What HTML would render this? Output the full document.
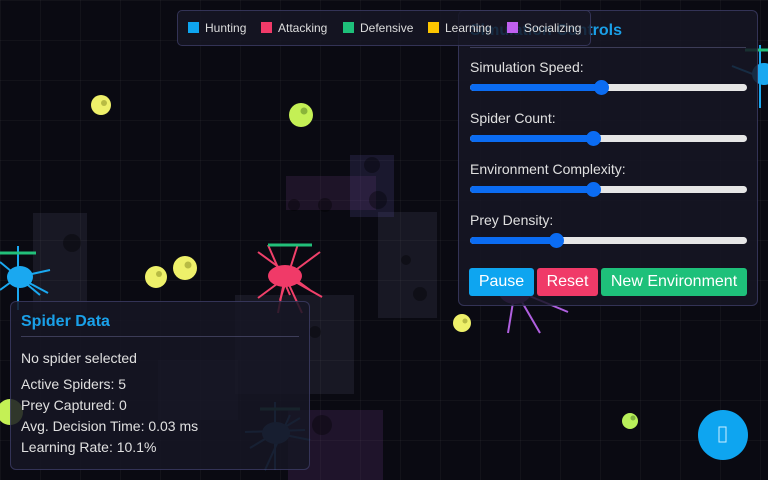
<!DOCTYPE html>
<html><head><meta charset="utf-8"><style>
*{margin:0;padding:0;box-sizing:border-box}
body{width:768px;height:480px;overflow:hidden;background:#0a0a12;font-family:"Liberation Sans",sans-serif;position:relative;
background-image:linear-gradient(rgba(255,255,255,.035) 1px,transparent 1px),linear-gradient(90deg,rgba(255,255,255,.035) 1px,transparent 1px);background-size:40px 40px}
svg.scene{position:absolute;left:0;top:0}
.panel{position:absolute;background:rgba(22,22,36,.85);border:1px solid rgba(90,90,150,.45);border-radius:6px}
.lbl{position:absolute;left:11px;color:#e0e0e0;font-size:14px}
.sl{position:absolute;left:11px;width:277px;height:7px;background:#e6e6e6;border-radius:4px}
.sl i{position:absolute;left:0;top:0;height:7px;background:#0b6cf2;border-radius:4px}
.sl b{position:absolute;top:-4px;width:15px;height:15px;border-radius:50%;background:#0b6cf2;margin-left:-7px}
.btn{position:absolute;top:257px;height:28px;color:#fff;font-size:16px;line-height:28px;text-align:center;border-radius:3px;white-space:nowrap}
.leg{position:absolute;z-index:10;left:177px;top:10px;width:414px;height:36px;background:rgba(22,22,36,.85);border:1px solid rgba(90,90,150,.45);border-radius:5px;font-size:12px;color:#ddd}
.leg span{position:absolute;top:11px;line-height:13px;white-space:nowrap}
.leg span:before{content:"";display:inline-block;width:11px;height:11px;margin-right:6px;vertical-align:-1px;background:var(--c)}
.dt{position:absolute;left:10px;color:#e0e0e0;font-size:14px}
</style></head><body>
<svg class="scene" width="768" height="480">
<g fill="rgba(120,120,160,.13)">
<rect x="33" y="213" width="54" height="100"/>
<rect x="235" y="295" width="119" height="99"/>
<rect x="378" y="212" width="59" height="106"/>
<rect x="158" y="360" width="80" height="60"/>
<rect x="350" y="155" width="44" height="62" fill="rgba(100,90,180,.18)"/>
</g>
<rect x="286" y="176" width="90" height="34" fill="rgba(110,60,130,.2)"/>
<rect x="288" y="410" width="95" height="70" fill="rgba(110,60,130,.22)"/>
<g fill="rgba(0,0,0,.35)"><circle cx="72" cy="243" r="9"/><circle cx="420" cy="294" r="7"/><circle cx="406" cy="260" r="5"/><circle cx="315" cy="332" r="6"/><circle cx="322" cy="425" r="10"/><circle cx="372" cy="165" r="8"/><circle cx="378" cy="200" r="9"/><circle cx="294" cy="205" r="6"/><circle cx="325" cy="205" r="7"/></g>
<circle cx="101" cy="105" r="10" fill="#eef06a"/><circle cx="104" cy="103" r="3" fill="#b8bb44"/>
<circle cx="301" cy="115" r="12" fill="#c4f055"/><circle cx="304" cy="111" r="3.5" fill="#8ab43a"/>
<circle cx="156" cy="277" r="11" fill="#eef06a"/><circle cx="159" cy="274" r="3" fill="#b8bb44"/>
<circle cx="185" cy="268" r="12" fill="#eef06a"/><circle cx="188" cy="265" r="3.5" fill="#b8bb44"/>
<circle cx="462" cy="323" r="9" fill="#eef06a"/><circle cx="465" cy="321" r="2.5" fill="#b8bb44"/>
<circle cx="630" cy="421" r="8" fill="#b8f05a"/><circle cx="633" cy="418" r="2.5" fill="#7fb040"/>
<circle cx="10" cy="412" r="13" fill="#c4f055"/>
<g stroke="#f0406a" stroke-width="2"><line x1="268" y1="245" x2="290" y2="295"/><line x1="298" y1="244" x2="280" y2="300"/><line x1="258" y1="252" x2="310" y2="290"/><line x1="320" y1="252" x2="258" y2="298"/><line x1="285" y1="276" x2="322" y2="297"/><line x1="285" y1="276" x2="302" y2="313"/><line x1="285" y1="276" x2="278" y2="313"/></g>
<line x1="268" y1="245" x2="312" y2="245" stroke="#22c07a" stroke-width="3"/>
<ellipse cx="285" cy="276" rx="17" ry="11" fill="#f03a68"/>
<g stroke="#1aa8f0" stroke-width="2"><line x1="18" y1="246" x2="18" y2="310"/><line x1="0" y1="262" x2="40" y2="295"/><line x1="18" y1="277" x2="50" y2="270"/><line x1="18" y1="277" x2="48" y2="293"/><line x1="18" y1="277" x2="0" y2="290"/></g>
<line x1="0" y1="253" x2="36" y2="253" stroke="#22c07a" stroke-width="3"/>
<ellipse cx="20" cy="277" rx="13" ry="11" fill="#1aa8f0"/>
<g stroke="#1aa8f0" stroke-width="2"><line x1="760" y1="45" x2="760" y2="108"/><line x1="732" y1="66" x2="768" y2="80"/></g>
<line x1="745" y1="50" x2="768" y2="50" stroke="#22c07a" stroke-width="3"/>
<ellipse cx="764" cy="74" rx="12" ry="11" fill="#1aa8f0"/>
<g stroke="#1c5a86" stroke-width="2"><line x1="275" y1="402" x2="275" y2="470"/><line x1="245" y1="432" x2="305" y2="430"/><line x1="250" y1="448" x2="300" y2="418"/><line x1="265" y1="470" x2="290" y2="415"/><line x1="275" y1="433" x2="310" y2="440"/></g>
<line x1="260" y1="409" x2="300" y2="409" stroke="#1e6a55" stroke-width="3"/>
<ellipse cx="276" cy="433" rx="14" ry="11" fill="#1b4e74"/>
<g stroke="#b060e0" stroke-width="2"><line x1="515" y1="290" x2="508" y2="333"/><line x1="515" y1="290" x2="540" y2="333"/><line x1="515" y1="290" x2="568" y2="312"/></g>
<ellipse cx="515" cy="292" rx="16" ry="12" fill="#7a3aa0"/>
<circle cx="723" cy="435" r="25" fill="#0ea5f0"/>
<rect x="719" y="427" width="7" height="15" fill="none" stroke="#cdeeff" stroke-width="1"/>
</svg>

<div class="panel" style="left:458px;top:10px;width:300px;height:296px">
<div style="position:absolute;left:11px;top:11px;font-size:16px;font-weight:bold;color:#1aa0e8">Simulation Controls</div>
<div style="position:absolute;left:11px;right:11px;top:36px;border-top:1px solid rgba(120,120,170,.4)"></div>
<div class="lbl" style="top:48px">Simulation Speed:</div>
<div class="sl" style="top:73px"><i style="width:131px"></i><b style="left:131px"></b></div>
<div class="lbl" style="top:99px">Spider Count:</div>
<div class="sl" style="top:124px"><i style="width:123px"></i><b style="left:123px"></b></div>
<div class="lbl" style="top:150px">Environment Complexity:</div>
<div class="sl" style="top:175px"><i style="width:123px"></i><b style="left:123px"></b></div>
<div class="lbl" style="top:201px">Prey Density:</div>
<div class="sl" style="top:226px"><i style="width:86px"></i><b style="left:86px"></b></div>
<div class="btn" style="left:10px;width:65px;background:#0ea5f0">Pause</div>
<div class="btn" style="left:78px;width:61px;background:#f03a68">Reset</div>
<div class="btn" style="left:142px;width:146px;background:#1ec07a">New Environment</div>
</div>

<div class="leg">
<span style="left:10px;--c:#0ea5f0">Hunting</span>
<span style="left:83px;--c:#f03a68">Attacking</span>
<span style="left:165px;--c:#1ec07a">Defensive</span>
<span style="left:250px;--c:#fcc500">Learning</span>
<span style="left:329px;--c:#c060f0">Socializing</span>
</div>

<div class="panel" style="left:10px;top:301px;width:300px;height:169px">
<div style="position:absolute;left:10px;top:11px;font-size:16px;font-weight:bold;color:#1aa0e8">Spider Data</div>
<div style="position:absolute;left:10px;right:10px;top:34px;border-top:1px solid rgba(120,120,170,.4)"></div>
<div class="dt" style="top:48px">No spider selected</div>
<div class="dt" style="top:74px">Active Spiders: 5</div>
<div class="dt" style="top:95px">Prey Captured: 0</div>
<div class="dt" style="top:116px">Avg. Decision Time: 0.03 ms</div>
<div class="dt" style="top:137px">Learning Rate: 10.1%</div>
</div>
</body></html>
